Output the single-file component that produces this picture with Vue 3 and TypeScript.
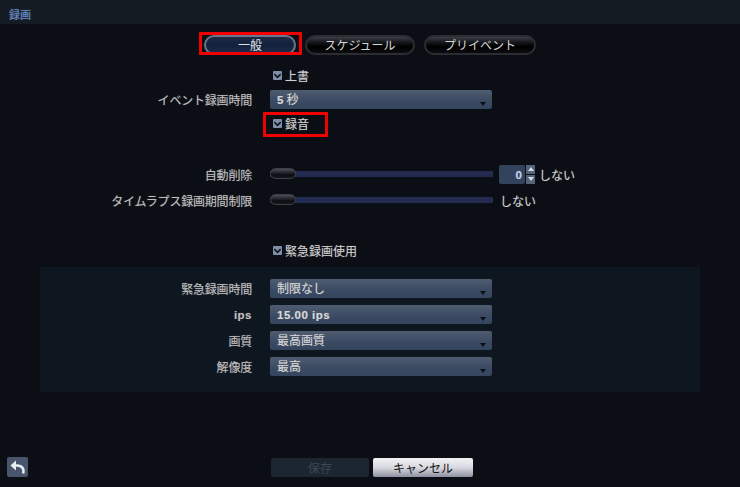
<script setup lang="ts">
interface Choice { label: string; value: string; latin?: boolean }
const tabs = [
  { name: '一般', cls: 'tab-general', active: true },
  { name: 'スケジュール', cls: 'tab-schedule', active: false },
  { name: 'プリイベント', cls: 'tab-event', active: false },
]
const choices: Choice[] = [
  { label: '緊急録画時間', value: '制限なし' },
  { label: 'ips', value: '15.00 ips', latin: true },
  { label: '画質', value: '最高画質' },
  { label: '解像度', value: '最高' },
]
</script>

<template>
  <div class="screen">
    <header class="title-bar">録画</header>

    <nav class="tabs">
      <button v-for="t in tabs" :key="t.name" class="tab" :class="[t.cls, { active: t.active }]">
        {{ t.name }}
        <span v-if="t.active" class="red-mark mark-tab"></span>
      </button>
    </nav>

    <section class="form">
      <div class="row check-row first">
        <span></span>
        <label class="check"><span class="box"><svg viewBox="0 0 8 8"><path d="M1.2 2.8 L4 5.6 L6.8 2.8" /></svg></span>上書</label>
      </div>
      <div class="row select-row gap5">
        <span class="label">イベント録画時間</span>
        <div class="select"><span><b class="latin">5</b> 秒</span><i class="caret"></i></div>
      </div>
      <div class="row check-row gap4">
        <span></span>
        <label class="check"><span class="box"><svg viewBox="0 0 8 8"><path d="M1.2 2.8 L4 5.6 L6.8 2.8" /></svg></span>録音<span class="red-mark mark-audio"></span></label>
      </div>
      <div class="row slider-row gap31">
        <span class="label">自動削除</span>
        <div class="slider-wrap">
          <div class="slider"><span class="thumb"></span></div>
          <div class="spin-value">0</div>
          <div class="spin-arrows">
            <span class="spin up"><i></i></span>
            <span class="spin down"><i></i></span>
          </div>
          <span class="unit">しない</span>
        </div>
      </div>
      <div class="row slider-row gap6">
        <span class="label">タイムラプス録画期間制限</span>
        <div class="slider-wrap">
          <div class="slider"><span class="thumb"></span></div>
          <span class="unit near">しない</span>
        </div>
      </div>
      <div class="row check-row gap30">
        <span></span>
        <label class="check"><span class="box"><svg viewBox="0 0 8 8"><path d="M1.2 2.8 L4 5.6 L6.8 2.8" /></svg></span>緊急録画使用</label>
      </div>
    </section>

    <section class="panel">
      <div v-for="c in choices" :key="c.label" class="row select-row panel-row">
        <span class="label" :class="{ latin: c.latin }">{{ c.label }}</span>
        <div class="select"><span :class="{ latin: c.latin }">{{ c.value }}</span><i class="caret"></i></div>
      </div>
    </section>

    <footer class="footer">
      <button class="back" aria-label="戻る">
        <svg viewBox="0 0 21 20">
          <path d="M16 16.5 C17.5 12 15 8.5 10 8.5 H6.5" />
          <path class="head" d="M3.5 8.5 L9 3.5 V13.5 Z" />
        </svg>
      </button>
      <button class="action save" disabled>保存</button>
      <button class="action cancel">キャンセル</button>
    </footer>
  </div>
</template>

<style>
html, body { margin: 0; background: #0c0e15; }
</style>

<style scoped>
.screen {
  width: 740px;
  height: 487px;
  display: flex;
  flex-direction: column;
  overflow: hidden;
  background: #0c0e15;
  color: #c9c9c9;
  font-family: "Noto Sans CJK JP", "Liberation Sans", sans-serif;
  font-size: 12px;
  text-shadow: 0 0 1px rgba(205, 205, 205, 0.45);
}
.title-bar {
  height: 24px;
  box-sizing: border-box;
  padding: 7px 0 0 9px;
  line-height: 15px;
  font-size: 11px;
  color: #5d86c9;
  background: #141b23;
}
.tabs {
  height: 20px;
  margin-top: 11px;
  display: flex;
  gap: 9px;
  padding-left: 204px;
}
.tab {
  position: relative;
  height: 20px;
  padding: 0;
  border: 2px solid #2b2d33;
  border-radius: 10px;
  background: linear-gradient(#3a3c44 0%, #15161b 35%, #000 60%, #0c0c10 100%);
  color: #d5d5d5;
  font: inherit;
  line-height: 16px;
}
.tab-general { width: 92px; }
.tab-schedule { width: 110px; }
.tab-event { width: 112px; }
.tab.active {
  border-color: #6b7688;
  background: linear-gradient(#1c2a45 0%, #13203c 50%, #1d2c4c 100%);
  color: #e2e2e2;
}
.red-mark {
  position: absolute;
  border: 3px solid #f00000;
  box-sizing: border-box;
  pointer-events: none;
}
.mark-tab { left: -7px; top: -5px; width: 103px; height: 23px; }
.mark-audio { left: -10px; top: -3px; width: 65px; height: 25px; }

.form { display: flex; flex-direction: column; margin-top: 10px; }
.row {
  display: grid;
  grid-template-columns: 252px 1fr;
  column-gap: 18px;
  align-items: center;
}
.label { text-align: right; color: #bdbdbd; letter-spacing: -0.2px; white-space: nowrap; }
.latin {
  font-family: "Liberation Sans", sans-serif;
  font-weight: 700;
  font-size: 11.5px;
  letter-spacing: 0.5px;
}
.check-row { height: 20px; }
.select-row { height: 19px; }
.slider-row { height: 20px; }
.gap4 { margin-top: 4px; }
.gap5 { margin-top: 5px; }
.gap6 { margin-top: 6px; }
.gap30 { margin-top: 30px; }
.gap31 { margin-top: 31px; }
.check {
  position: relative;
  display: inline-flex;
  align-items: center;
  gap: 3px;
  width: max-content;
  margin-left: 3px;
  color: #cfcfcf;
}
.box {
  width: 9px;
  height: 9px;
  background: #7d8ea8;
  border-radius: 1px;
  display: block;
}
.box svg { display: block; width: 9px; height: 9px; }
.box path { fill: none; stroke: #10141c; stroke-width: 1.4; }
.select {
  position: relative;
  width: 222px;
  height: 19px;
  box-sizing: border-box;
  padding-left: 7px;
  line-height: 18px;
  background: linear-gradient(#4f5c70, #3a4a62 60%, #34455e);
  color: #d6d6d6;
  font-size: 12px;
  border-radius: 2px;
}
.caret {
  position: absolute;
  right: 6px;
  bottom: 3px;
  border-left: 3.5px solid transparent;
  border-right: 3.5px solid transparent;
  border-top: 4px solid #0b0e14;
}
.slider-wrap { display: flex; align-items: center; }
.slider {
  position: relative;
  width: 223px;
  height: 6px;
  background: #232c50;
}
.thumb {
  position: absolute;
  left: 0;
  top: -3px;
  width: 26px;
  height: 11px;
  border-radius: 6px;
  border: 1px solid #3d4049;
  box-sizing: border-box;
  background: linear-gradient(#4a4d56, #0d0e13 65%, #17181e);
}
.spin-value {
  width: 26px;
  height: 19px;
  margin-left: 6px;
  box-sizing: border-box;
  padding-right: 3px;
  text-align: right;
  line-height: 19px;
  font-size: 11px;
  font-weight: 700;
  background: #34435c;
  color: #b9cdf0;
  border-radius: 2px;
}
.spin-arrows { display: flex; flex-direction: column; gap: 1px; margin-left: 1px; }
.spin {
  display: flex;
  align-items: center;
  justify-content: center;
  width: 9px;
  height: 9px;
  background: #55637a;
}
.spin i { width: 0; height: 0; border-left: 3px solid transparent; border-right: 3px solid transparent; }
.up i { border-bottom: 4px solid #d7dde6; }
.down i { border-top: 4px solid #d7dde6; }
.unit { margin-left: 4px; color: #cfcfcf; }
.unit.near { margin-left: 7px; }

.panel {
  margin: 7px 40px 0;
  padding: 12px 0 16px;
  display: flex;
  flex-direction: column;
  gap: 7px;
  background: #0e161f;
}
.panel-row { grid-template-columns: 212px 1fr; }

.footer {
  margin-top: auto;
  padding: 0 0 10px 7px;
  display: flex;
  align-items: flex-end;
}
.back {
  width: 21px;
  height: 20px;
  padding: 0;
  border: 0;
  background: #48566c;
  border-radius: 2px;
}
.back svg { display: block; width: 21px; height: 20px; }
.back path { fill: none; stroke: #e8edf4; stroke-width: 2.6; }
.back .head { fill: #e8edf4; stroke: none; }
.action {
  height: 19px;
  padding: 0;
  border: 0;
  border-radius: 2px;
  font: inherit;
  line-height: 19px;
  text-shadow: none;
}
.save {
  width: 98px;
  margin-left: 243px;
  background: #1c2630;
  color: #3b4753;
}
.cancel {
  width: 100px;
  margin-left: 4px;
  background: linear-gradient(#f2f2f4, #d8d9df 50%, #8d90a0);
  color: #111;
}
</style>
